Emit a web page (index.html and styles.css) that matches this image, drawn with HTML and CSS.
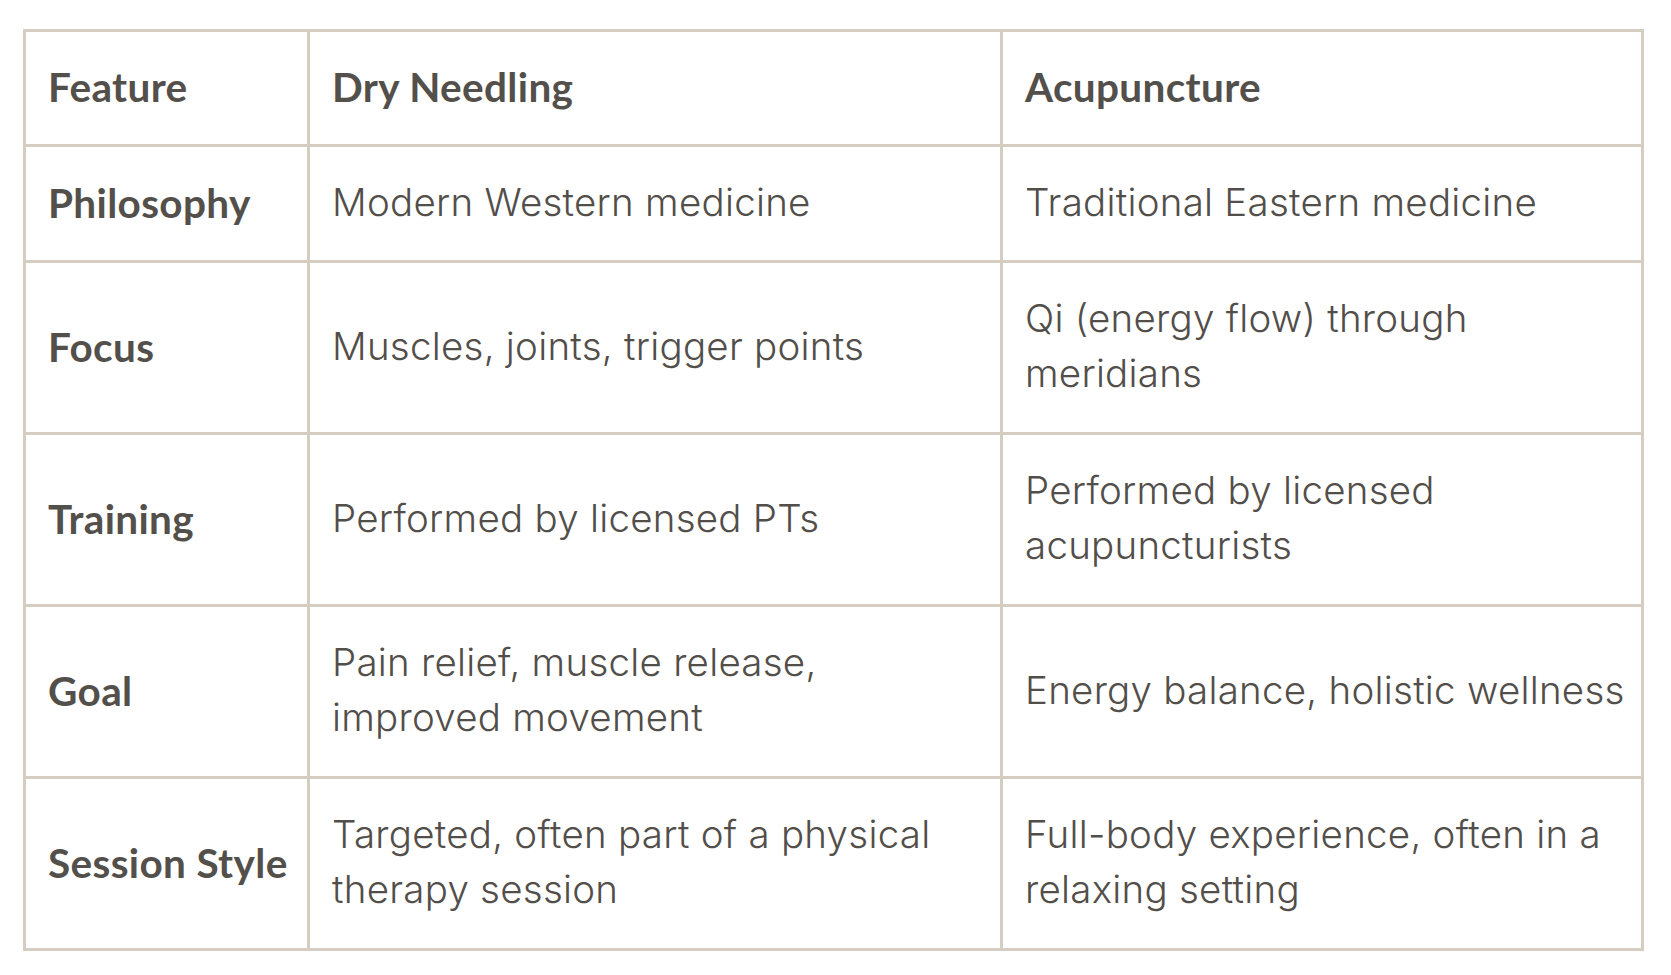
FILE: index.html
```html
<!DOCTYPE html>
<html lang="en">
<head>
<meta charset="utf-8">
<title>Dry Needling vs Acupuncture</title>
<link rel="stylesheet" href="styles.css">
</head>
<body>
<div class="compare" role="table">
  <div class="cell head" role="columnheader">Feature</div>
  <div class="cell head" role="columnheader">Dry Needling</div>
  <div class="cell head" role="columnheader">Acupuncture</div>

  <div class="cell label" role="rowheader">Philosophy</div>
  <div class="cell" role="cell">Modern Western medicine</div>
  <div class="cell" role="cell">Traditional Eastern medicine</div>

  <div class="cell label" role="rowheader">Focus</div>
  <div class="cell" role="cell">Muscles, joints, trigger points</div>
  <div class="cell" role="cell">Qi (energy flow) through<br>meridians</div>

  <div class="cell label" role="rowheader">Training</div>
  <div class="cell" role="cell">Performed by licensed PTs</div>
  <div class="cell" role="cell">Performed by licensed<br>acupuncturists</div>

  <div class="cell label" role="rowheader">Goal</div>
  <div class="cell" role="cell">Pain relief, muscle release,<br>improved movement</div>
  <div class="cell" role="cell">Energy balance, holistic wellness</div>

  <div class="cell label" role="rowheader">Session Style</div>
  <div class="cell" role="cell">Targeted, often part of a physical<br>therapy session</div>
  <div class="cell" role="cell">Full-body experience, often in a<br>relaxing setting</div>
</div>
</body>
</html>
```
FILE: styles.css
```css
html, body {
  margin: 0;
  padding: 0;
  background: #ffffff;
}

body {
  padding: 29px 0 0 23px;
}

.compare {
  display: grid;
  grid-template-columns: 281px 690px 638px;
  grid-template-rows: 112px 113px 169px 169px 169px 169px;
  gap: 3px;
  padding: 3px;
  width: max-content;
  background: #d6cdc2;
}

.cell {
  background: #ffffff;
  display: flex;
  flex-direction: column;
  justify-content: center;
  padding: 0 10px 3px 22px;
  font-family: Inter, "Liberation Sans", sans-serif;
  font-weight: 300;
  font-size: 38.5px;
  line-height: 55px;
  letter-spacing: 0.25px;
  color: #524e4a;
  white-space: nowrap;
}

.head,
.label {
  font-family: Lato, "Liberation Sans", sans-serif;
  font-weight: 700;
  font-size: 40.5px;
  letter-spacing: 0.35px;
  color: #534f4b;
}
```
